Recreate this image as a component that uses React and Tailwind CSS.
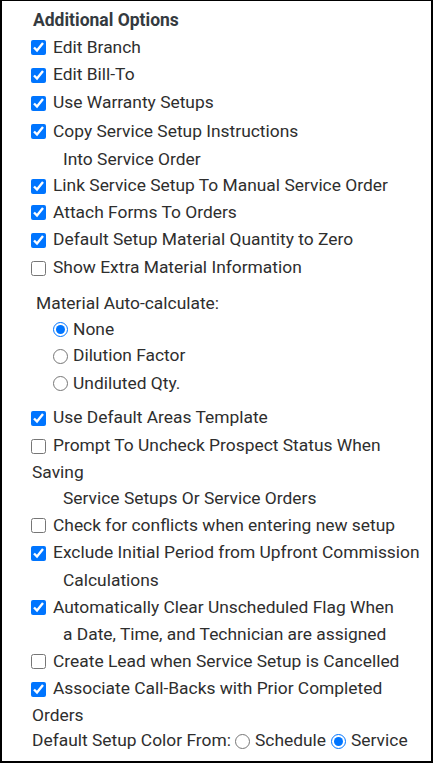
import React from "react";

const Check = ({ checked }) => (
  <input
    type="checkbox"
    defaultChecked={checked}
    className="m-0 ml-[-1px] mr-[7px] h-[15px] w-[15px] shrink-0"
  />
);

const Radio = ({ checked, name, className = "" }) => (
  <input
    type="radio"
    name={name}
    defaultChecked={checked}
    className={"m-0 h-[15px] w-[15px] shrink-0 " + className}
  />
);

const CRow = ({ h, checked, children }) => (
  <div className={"flex items-center whitespace-nowrap " + h}>
    <Check checked={checked} />
    <span>{children}</span>
  </div>
);

const TRow = ({ h, indent, children }) => (
  <div className={"flex items-center whitespace-nowrap " + h + (indent ? " pl-[31px]" : "")}>
    {children}
  </div>
);

export default function App() {
  return (
    <div className="box-border h-[763px] w-[433px] overflow-hidden border-t border-l-2 border-r-2 border-b-2 border-black bg-white font-['Roboto',sans-serif] text-[17.4px] leading-none text-[#2e2e2e]">
      <div className="flex flex-col pt-[6px] pl-[30px]">
        <div className="flex h-[27px] items-center pl-[1px] text-[17.5px] font-bold text-[#343a40]">Additional Options</div>
        <CRow h="h-[27px]" checked>Edit Branch</CRow>
        <CRow h="h-[28px]" checked>Edit Bill-To</CRow>
        <CRow h="h-[28px]" checked>Use Warranty Setups</CRow>
        <CRow h="h-[29px]" checked>Copy Service Setup Instructions</CRow>
        <TRow h="h-[27px]" indent>Into Service Order</TRow>
        <CRow h="h-[26px]" checked>Link Service Setup To Manual Service Order</CRow>
        <CRow h="h-[27px]" checked>Attach Forms To Orders</CRow>
        <CRow h="h-[28px]" checked>Default Setup Material Quantity to Zero</CRow>
        <CRow h="h-[28px]">Show Extra Material Information</CRow>

        <div className="mt-[9px] flex h-[26px] items-center pl-[4px]">Material Auto-calculate:</div>
        <div className="flex h-[25px] items-center pl-[21px]">
          <Radio name="mat" checked className="mr-[5px]" />
          <span>None</span>
        </div>
        <div className="flex h-[28px] items-center pl-[21px]">
          <Radio name="mat" className="mr-[5px]" />
          <span>Dilution Factor</span>
        </div>
        <div className="flex h-[27px] items-center pl-[21px]">
          <Radio name="mat" className="mr-[5px]" />
          <span>Undiluted Qty.</span>
        </div>

        <div className="mt-[7px] flex flex-col">
          <CRow h="h-[28px]" checked>Use Default Areas Template</CRow>
          <CRow h="h-[28px]">Prompt To Uncheck Prospect Status When</CRow>
          <TRow h="h-[26px]">Saving</TRow>
          <TRow h="h-[26px]" indent>Service Setups Or Service Orders</TRow>
          <CRow h="h-[27px]">Check for conflicts when entering new setup</CRow>
          <CRow h="h-[28px]" checked>Exclude Initial Period from Upfront Commission</CRow>
          <TRow h="h-[27px]" indent>Calculations</TRow>
          <CRow h="h-[27px]" checked>Automatically Clear Unscheduled Flag When</CRow>
          <TRow h="h-[27px]" indent>a Date, Time, and Technician are assigned</TRow>
          <CRow h="h-[27px]">Create Lead when Service Setup is Cancelled</CRow>
          <CRow h="h-[28px]" checked>Associate Call-Backs with Prior Completed</CRow>
          <TRow h="h-[25px]">Orders</TRow>
          <div className="flex h-[26px] items-center whitespace-nowrap">
            <span>Default Setup Color From:</span>
            <Radio name="color" className="ml-[4px] mr-[5px]" />
            <span>Schedule</span>
            <Radio name="color" checked className="ml-[5px] mr-[5px]" />
            <span>Service</span>
          </div>
        </div>
      </div>
    </div>
  );
}
